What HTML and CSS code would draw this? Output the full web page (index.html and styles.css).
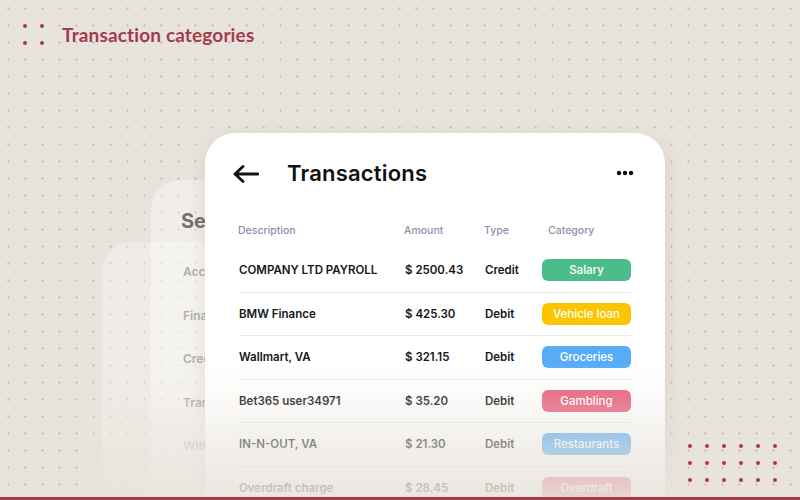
FILE: index.html
```html
<!DOCTYPE html>
<html lang="en">

<head>
  <meta charset="UTF-8">
  <title>Transaction categories</title>
  <link rel="stylesheet" href="styles.css">
</head>

<body>
  <div class="page">
    <header class="topbar">
      <div class="mark">
        <span></span><span></span><span></span><span></span>
      </div>
      <h1>Transaction categories</h1>
    </header>

    <div class="stage">
      <div class="ghost ghost-back">
        <h2>Settings</h2>
        <ul>
          <li>Accounts</li>
          <li>Finance</li>
          <li>Credit</li>
          <li>Transactions</li>
          <li class="faded">Withdrawals</li>
        </ul>
      </div>
      <div class="ghost ghost-front"></div>

      <div class="card">
        <div class="card-head">
          <svg class="back" width="26" height="18" viewBox="0 0 26 18">
            <path d="M2 9H25M10 1.5L2 9L10 16.5" fill="none" stroke="#111" stroke-width="2.8" stroke-linecap="round" stroke-linejoin="round" />
          </svg>
          <h2>Transactions</h2>
          <svg class="more" width="18" height="6" viewBox="0 0 18 6">
            <circle cx="3" cy="3" r="2.2" fill="#111" />
            <circle cx="9" cy="3" r="2.2" fill="#111" />
            <circle cx="15" cy="3" r="2.2" fill="#111" />
          </svg>
        </div>

        <div class="table">
          <div class="row labels">
            <span>Description</span>
            <span>Amount</span>
            <span>Type</span>
            <span class="cat-label">Category</span>
          </div>
          <div class="row">
            <span>COMPANY LTD PAYROLL</span>
            <span>$ 2500.43</span>
            <span>Credit</span>
            <span class="badge salary">Salary</span>
          </div>
          <div class="row">
            <span>BMW Finance</span>
            <span>$ 425.30</span>
            <span>Debit</span>
            <span class="badge vehicle">Vehicle loan</span>
          </div>
          <div class="row">
            <span>Wallmart, VA</span>
            <span>$ 321.15</span>
            <span>Debit</span>
            <span class="badge groceries">Groceries</span>
          </div>
          <div class="row">
            <span>Bet365 user34971</span>
            <span>$ 35.20</span>
            <span>Debit</span>
            <span class="badge gambling">Gambling</span>
          </div>
          <div class="row">
            <span>IN-N-OUT, VA</span>
            <span>$ 21.30</span>
            <span>Debit</span>
            <span class="badge restaurants">Restaurants</span>
          </div>
          <div class="row">
            <span>Overdraft charge</span>
            <span>$ 28.45</span>
            <span>Debit</span>
            <span class="badge overdraft">Overdraft</span>
          </div>
        </div>
      </div>

      <div class="fade"></div>
    </div>

    <div class="red-dots">
      <span></span><span></span><span></span><span></span><span></span><span></span>
      <span></span><span></span><span></span><span></span><span></span><span></span>
      <span></span><span></span><span></span><span></span><span></span><span></span>
    </div>
  </div>
</body>

</html>
```

FILE: styles.css
```css
html,
body {
  margin: 0;
  height: 500px;
  overflow: hidden;
}

body {
  font-family: 'Inter', 'Open Sans', sans-serif;
  background-color: #e8e3dc;
  background-image: radial-gradient(circle, #dcbcb7 1px, transparent 1.4px);
  background-size: 17px 17px;
  background-position: 0 0;
}

.page {
  position: relative;
  width: 800px;
  height: 500px;
  box-sizing: border-box;
  border-bottom: 3px solid #a33b47;
}

.topbar {
  display: flex;
  align-items: center;
  gap: 18px;
  padding: 23px 0 0 23px;
}

.mark {
  display: grid;
  grid-template-columns: 4px 4px;
  gap: 13px;
}

.mark span {
  width: 4px;
  height: 4px;
  border-radius: 50%;
  background: #a33b4b;
}

.topbar h1 {
  margin: 0;
  font-family: 'Lato', sans-serif;
  font-size: 19px;
  font-weight: 700;
  color: #a33b4b;
  letter-spacing: 0.15px;
}

.stage {
  position: absolute;
  left: 0;
  top: 0;
  width: 800px;
  height: 497px;
  overflow: hidden;
}

/* cards peeking out behind the main one, clipped at its left edge */
.ghost {
  position: absolute;
  height: 400px;
  overflow: hidden;
  border-radius: 30px 0 0 0;
}

.ghost-back {
  left: 151px;
  top: 180px;
  width: 54px;
  background: rgba(255, 255, 255, 0.38);
  padding: 28px 0 0 30px;
  box-sizing: border-box;
  white-space: nowrap;
}

.ghost-back h2 {
  margin: 0;
  font-size: 20px;
  font-weight: 700;
  color: #727272;
  line-height: 26px;
}

.ghost-back ul {
  list-style: none;
  margin: 0;
  padding: 16px 0 0 2px;
}

.ghost-back li {
  height: 43.5px;
  line-height: 43.5px;
  font-size: 12px;
  font-weight: 600;
  color: #8b8b8b;
}

.ghost-back li.faded {
  color: #b5b2ad;
}

.ghost-front {
  left: 102px;
  top: 242px;
  width: 103px;
  background: rgba(255, 255, 255, 0.32);
}

.card {
  position: absolute;
  left: 205px;
  top: 133px;
  width: 460px;
  height: 420px;
  background: #fff;
  border-radius: 30px;
  box-shadow: 0 6px 20px rgba(90, 70, 50, 0.12);
  padding: 26px 34px 0 28px;
  box-sizing: border-box;
}

.card-head {
  display: flex;
  align-items: center;
  height: 28px;
}

.card-head .back {
  margin-top: 1px;
}

.card-head h2 {
  margin: 0 0 0 28px;
  font-size: 22px;
  font-weight: 600;
  color: #111;
  flex: 1;
  letter-spacing: 0.2px;
}

.card-head .more {
  margin-right: -3px;
}

.table {
  margin: 30px 0 0 6px;
}

.row {
  display: grid;
  grid-template-columns: 166px 80px 57px 89px;
  align-items: center;
  height: 42.5px;
  border-bottom: 1px solid #e8e8ee;
  font-size: 11.5px;
  font-weight: 600;
  color: #161616;
}

.row.labels {
  height: 26px;
  border-bottom: none;
  margin-bottom: 6px;
  font-size: 10.5px;
  font-weight: 500;
  color: #8b91a8;
  margin-left: -1px;
}

.cat-label {
  padding-left: 7px;
}

.badge {
  height: 22px;
  line-height: 22px;
  border-radius: 6px;
  text-align: center;
  color: #fff;
  font-size: 11.5px;
  font-weight: 500;
}

.salary {
  background: #4abd8a;
}

.vehicle {
  background: #fcc500;
}

.groceries {
  background: #57acf7;
}

.gambling {
  background: #e8607f;
}

.restaurants {
  background: #57acf7;
}

.overdraft {
  background: #e8607f;
}

.fade {
  position: absolute;
  left: 90px;
  top: 360px;
  width: 590px;
  height: 140px;
  background: linear-gradient(to bottom, rgba(232, 227, 220, 0) 0%, rgba(232, 227, 220, 0.15) 25%, rgba(232, 227, 220, 0.55) 60%, rgba(232, 227, 220, 0.9) 100%);
}

.red-dots {
  position: absolute;
  left: 688px;
  top: 444px;
  display: grid;
  grid-template-columns: repeat(6, 4px);
  gap: 13px;
}

.red-dots span {
  width: 4px;
  height: 4px;
  border-radius: 50%;
  background: #a33b4b;
}
```
